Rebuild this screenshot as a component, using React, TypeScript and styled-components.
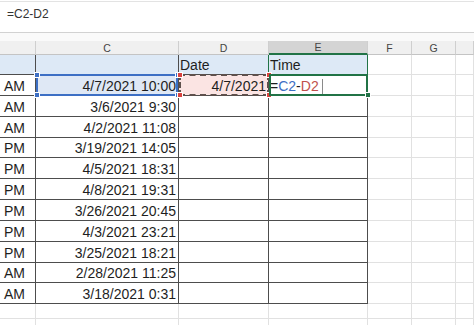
import React from 'react';
import styled, { createGlobalStyle, css } from 'styled-components';

const colors = {
    tableLine: '#4d4d4d',
    gridLine: '#e1e1e1',
    headerBg: '#f0f0f0',
    headerActive: '#d4d4d4',
    headerLine: '#cfcfcf',
    headerText: '#444444',
    rowOneBg: '#dde9f6',
    refBlue: '#3d6fc4',
    refBlueBg: '#dfe8f5',
    refRed: '#c0504d',
    copyBg: '#fbe4e3',
    green: '#217346',
    text: '#1e1e1e',
};

const COLUMNS = ['', 'C', 'D', 'E', 'F', 'G', ''];

const rows = [
    { b: 'AM', c: '4/7/2021 10:00' },
    { b: 'AM', c: '3/6/2021 9:30' },
    { b: 'AM', c: '4/2/2021 11:08' },
    { b: 'PM', c: '3/19/2021 14:05' },
    { b: 'PM', c: '4/5/2021 18:31' },
    { b: 'PM', c: '4/8/2021 19:31' },
    { b: 'PM', c: '3/26/2021 20:45' },
    { b: 'PM', c: '4/3/2021 23:21' },
    { b: 'PM', c: '3/25/2021 18:21' },
    { b: 'AM', c: '2/28/2021 11:25' },
    { b: 'AM', c: '3/18/2021 0:31' },
];

const GlobalStyle = createGlobalStyle`
    html, body {
        margin: 0;
        padding: 0;
        background: #ffffff;
        overflow: hidden;
    }
    body {
        font-family: 'Liberation Sans', Arial, sans-serif;
    }
`;

export default function App() {
    return <Page>
        <GlobalStyle />
        <FormulaBar>
            <FormulaText>=C2-D2</FormulaText>
        </FormulaBar>
        <Sheet>
            {COLUMNS.map((letter, i) => (
                <ColumnHeader key={'h' + i} $active={letter === 'E'}>{letter}</ColumnHeader>
            ))}

            {/* row 1: table headings */}
            <Cell $tone="table" $bg={colors.rowOneBg} />
            <Cell $tone="table" $bg={colors.rowOneBg} />
            <Cell $tone="table" $bg={colors.rowOneBg} $align="left" $rightLine={colors.green}>Date</Cell>
            <Cell $tone="table" $bg={colors.rowOneBg} $align="left" $rightLine={colors.green}>Time</Cell>
            <Cell $tone="grid" />
            <Cell $tone="grid" />
            <Cell $tone="grid" />

            {rows.map((row, i) => (
                <React.Fragment key={i}>
                    <Cell $tone="table" $pad={10}>{row.b}</Cell>
                    {i === 0 ? (
                        <Cell $tone="table" $bg={colors.refBlueBg} $ref>
                            {row.c}
                            <RefBox $kind="blue">
                                <Handle $kind="blue" $v="top" $h="left" />
                                <Handle $kind="blue" $v="top" $h="right" />
                                <Handle $kind="blue" $v="bottom" $h="left" />
                                <Handle $kind="blue" $v="bottom" $h="right" />
                            </RefBox>
                        </Cell>
                    ) : (
                        <Cell $tone="table">{row.c}</Cell>
                    )}
                    {i === 0 ? (
                        <Cell $tone="table" $bg={colors.copyBg} $ref>
                            4/7/2021
                            <RefBox $kind="red">
                                <Handle $kind="red" $v="top" $h="left" />
                                <Handle $kind="red" $v="top" $h="right" />
                                <Handle $kind="red" $v="bottom" $h="left" />
                                <Handle $kind="red" $v="bottom" $h="right" />
                            </RefBox>
                        </Cell>
                    ) : (
                        <Cell $tone="table" />
                    )}
                    {i === 0 ? (
                        <Cell $tone="table" $align="left" $ref>
                            <span>=</span>
                            <RefText $color={colors.refBlue}>C2</RefText>
                            <span>-</span>
                            <RefText $color={colors.refRed}>D2</RefText>
                            <Caret />
                            <RefBox $kind="green">
                                <Handle $kind="green" $v="bottom" $h="right" />
                            </RefBox>
                        </Cell>
                    ) : (
                        <Cell $tone="table" />
                    )}
                    <Cell $tone="grid" />
                    <Cell $tone="grid" />
                    <Cell $tone="grid" />
                </React.Fragment>
            ))}

            {Array.from({ length: 14 }).map((_, i) => (
                <Cell key={'e' + i} $tone="grid" />
            ))}
        </Sheet>
    </Page>
}

const Page = styled.div`
    width: 474px;
    height: 325px;
    overflow: hidden;
    background: #ffffff;
`;

const FormulaBar = styled.div`
    margin-top: 1px;
    height: 32px;
    box-sizing: border-box;
    border-top: 1px solid #e3e3e3;
    border-bottom: 1px solid #d2d2d2;
    padding: 5px 7px 0;
`;

const FormulaText = styled.div`
    font-size: 12px;
    line-height: 14px;
    color: #333333;
`;

const Sheet = styled.div`
    display: grid;
    grid-template-columns: 36px 143px 90px 99px 44px 44px 18px;
    grid-template-rows: 14px 20px repeat(11, 20.85px) 14.5px 20px;
    padding-top: 8px;
    background: linear-gradient(#fafafa, #fafafa) top / 100% 8px no-repeat;
`;

const ColumnHeader = styled.div<{ $active?: boolean }>`
    box-sizing: border-box;
    display: flex;
    align-items: center;
    justify-content: center;
    font-size: 10.5px;
    line-height: 1;
    padding-top: 1px;
    color: ${colors.headerText};
    background: ${colors.headerBg};
    border-right: 1px solid ${colors.headerLine};
    border-bottom: 1px solid #c4c4c4;

    ${({ $active }) => $active && css`
        background: ${colors.headerActive};
        border-bottom: 2px solid ${colors.green};
    `}
`;

interface CellProps {
    $tone: 'table' | 'grid';
    $bg?: string;
    $align?: 'left' | 'right';
    $pad?: number;
    $ref?: boolean;
    $rightLine?: string;
}

const Cell = styled.div<CellProps>`
    box-sizing: border-box;
    display: flex;
    align-items: flex-end;
    justify-content: ${({ $align }) => ($align === 'left' ? 'flex-start' : 'flex-end')};
    padding: ${({ $align, $pad }) => ($align === 'left' ? '0 0 2px 1px' : `0 ${$pad ?? 2}px 2px 0`)};
    font-size: 14px;
    line-height: 14px;
    color: ${colors.text};
    white-space: nowrap;
    background: ${({ $bg }) => $bg || 'transparent'};
    border-right: 1px solid ${({ $tone, $rightLine }) => $rightLine || ($tone === 'table' ? colors.tableLine : colors.gridLine)};
    border-bottom: 1px solid ${({ $tone }) => ($tone === 'table' ? colors.tableLine : colors.gridLine)};

    ${({ $ref }) => $ref && css`
        position: relative;
    `}
`;

const RefText = styled.span<{ $color: string }>`
    color: ${({ $color }) => $color};
`;

const Caret = styled.span`
    display: inline-block;
    width: 1px;
    height: 16px;
    margin-left: 3px;
    margin-bottom: -2px;
    background: #8a8a8a;
`;

const kindColor = {
    blue: colors.refBlue,
    red: '#d9423f',
    green: colors.green,
};

const RefBox = styled.div<{ $kind: 'blue' | 'red' | 'green' }>`
    position: absolute;
    top: -1px;
    left: 0;
    right: -1px;
    bottom: -1px;
    z-index: 2;
    pointer-events: none;

    ${({ $kind }) => $kind === 'blue' && css`
        border: 2px solid ${colors.refBlue};
        right: 0;
    `}

    ${({ $kind }) => $kind === 'red' && css`
        border: 2px dashed #5e504c;
    `}

    ${({ $kind }) => $kind === 'green' && css`
        border: 2px solid ${colors.green};
    `}
`;

const Handle = styled.span<{ $kind: 'blue' | 'red' | 'green'; $v: 'top' | 'bottom'; $h: 'left' | 'right' }>`
    position: absolute;
    width: 4px;
    height: 4px;
    box-sizing: content-box;
    background: ${({ $kind }) => kindColor[$kind]};
    border: 1px solid #ffffff;
    ${({ $v }) => ($v === 'top' ? 'top: -4.5px;' : 'bottom: -4.5px;')}
    ${({ $h }) => ($h === 'left' ? 'left: -4.5px;' : 'right: -4.5px;')}
`;
